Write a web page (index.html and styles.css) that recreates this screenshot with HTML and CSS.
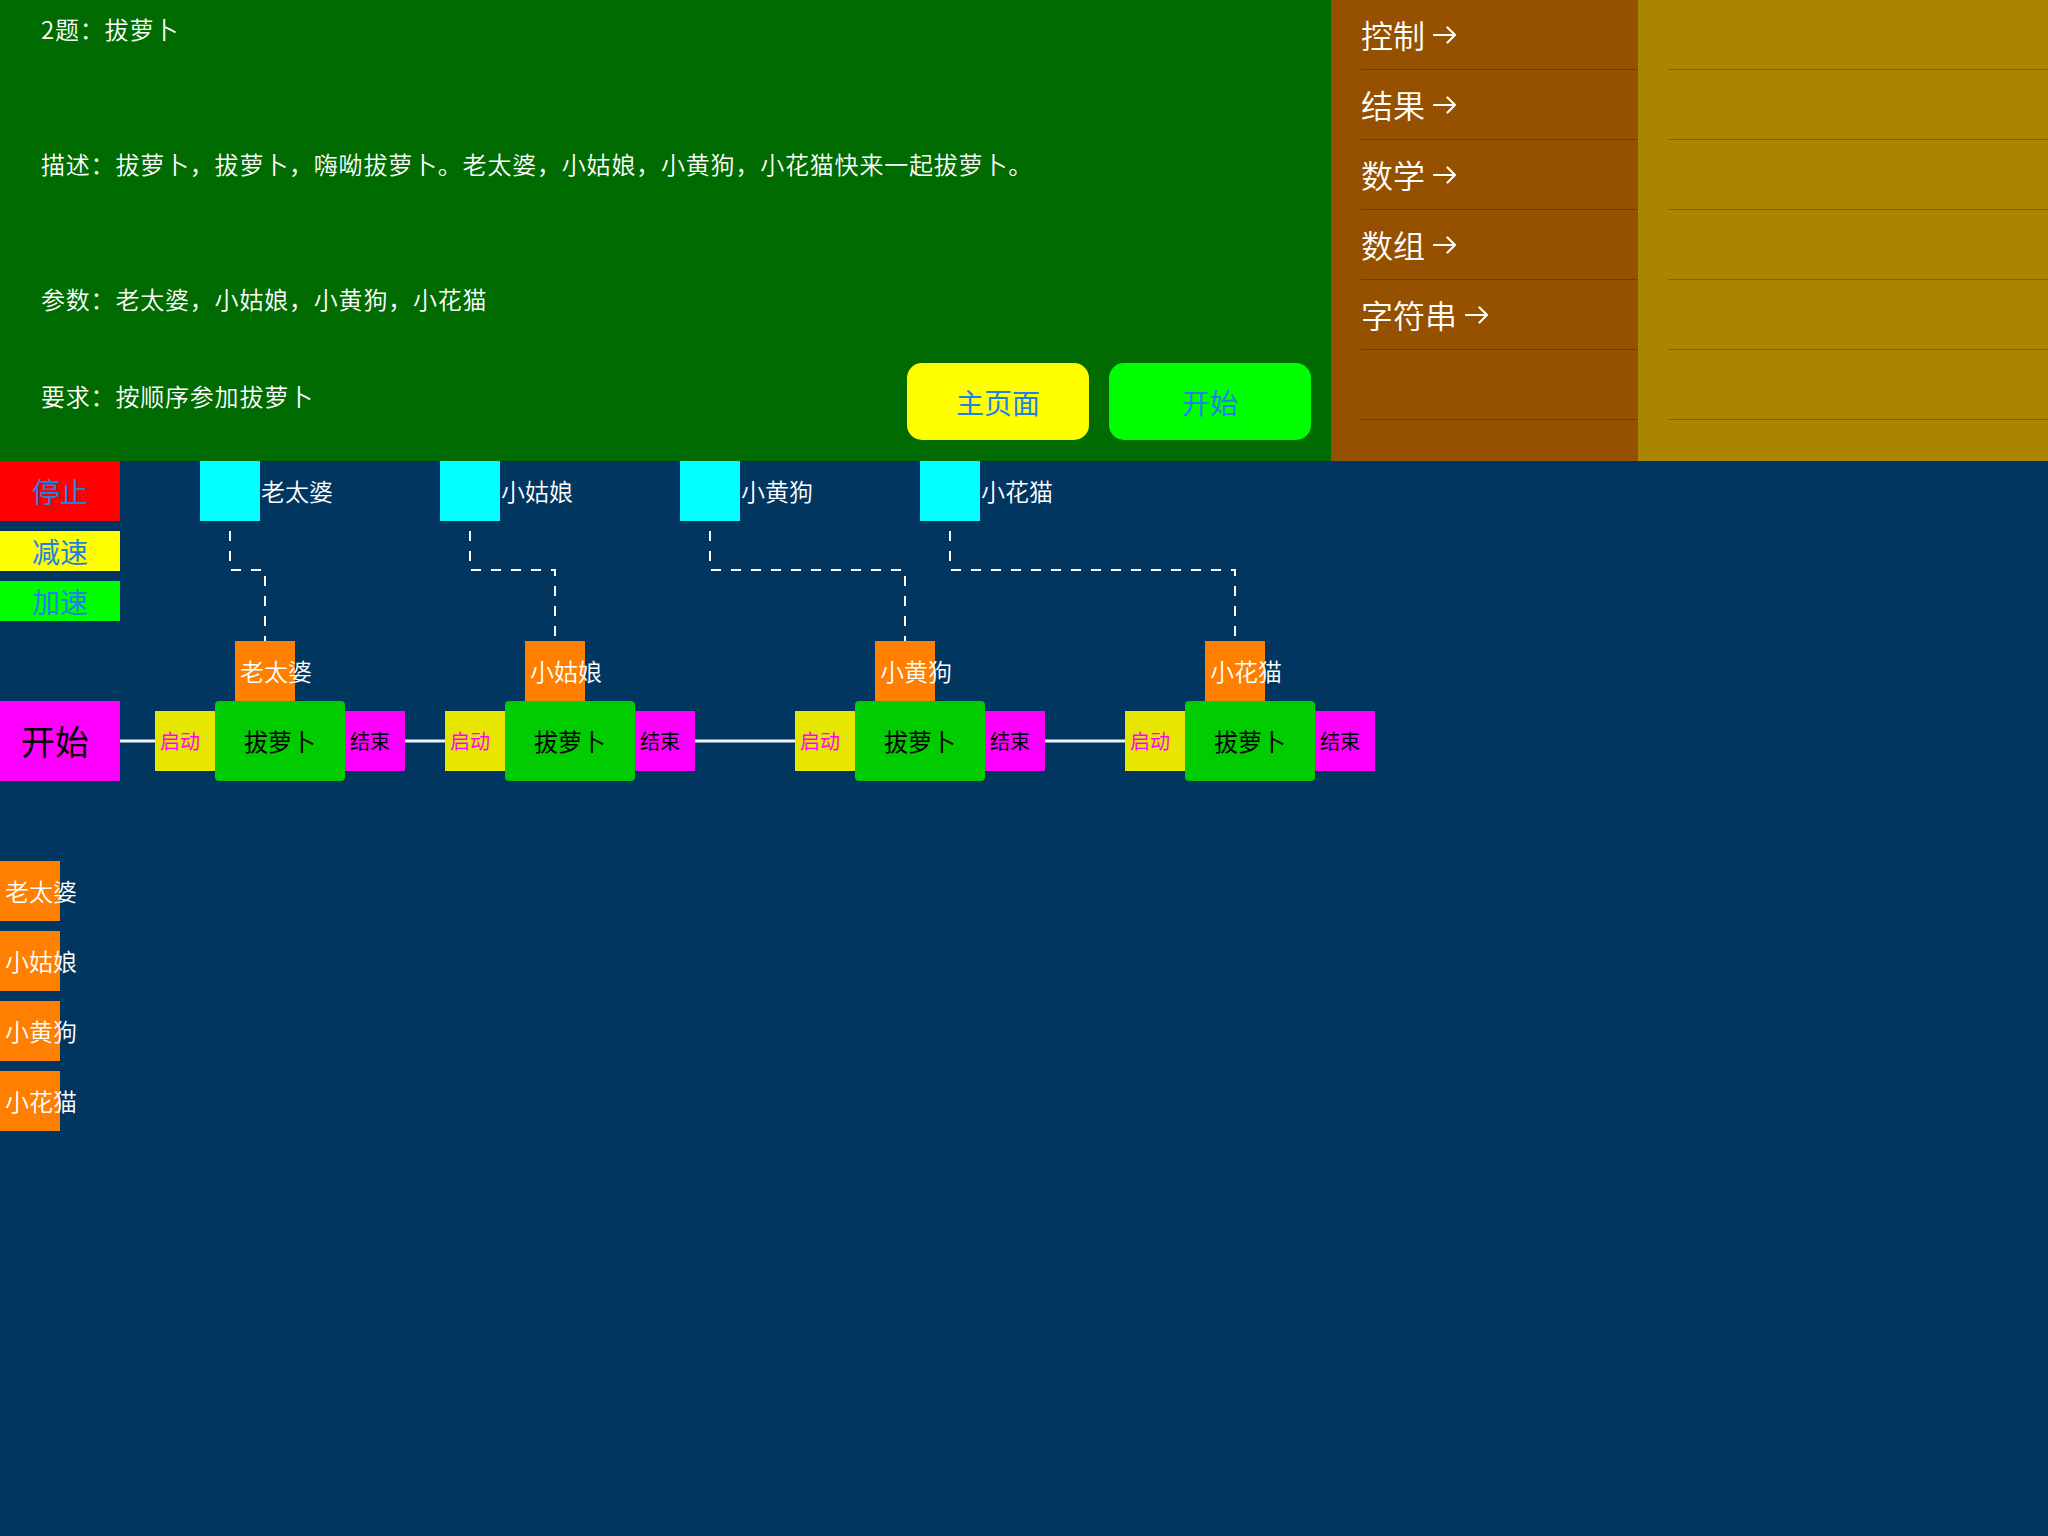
FILE: index.html
```html
<!DOCTYPE html>
<html lang="zh-CN">
<head>
<meta charset="utf-8">
<title>拔萝卜</title>
<link rel="stylesheet" href="styles.css">
</head>
<body>
<div class="page">
  <header class="top">
    <section class="info">
      <div class="line title">2题：拔萝卜</div>
      <div class="line desc">描述：拔萝卜，拔萝卜，嗨呦拔萝卜。老太婆，小姑娘，小黄狗，小花猫快来一起拔萝卜。</div>
      <div class="line params">参数：老太婆，小姑娘，小黄狗，小花猫</div>
      <div class="req-row">
        <div class="req">要求：按顺序参加拔萝卜</div>
        <div class="actions">
          <button class="btn btn-home">主页面</button>
          <button class="btn btn-start">开始</button>
        </div>
      </div>
    </section>
    <nav class="menu">
      <div class="menu-row"><span>控制</span><svg class="arrow" width="24" height="18" viewBox="0 0 24 18"><path d="M1 9 H22 M14.5 1.5 L22 9 L14.5 16.5"/></svg></div>
      <div class="menu-row"><span>结果</span><svg class="arrow" width="24" height="18" viewBox="0 0 24 18"><path d="M1 9 H22 M14.5 1.5 L22 9 L14.5 16.5"/></svg></div>
      <div class="menu-row"><span>数学</span><svg class="arrow" width="24" height="18" viewBox="0 0 24 18"><path d="M1 9 H22 M14.5 1.5 L22 9 L14.5 16.5"/></svg></div>
      <div class="menu-row"><span>数组</span><svg class="arrow" width="24" height="18" viewBox="0 0 24 18"><path d="M1 9 H22 M14.5 1.5 L22 9 L14.5 16.5"/></svg></div>
      <div class="menu-row"><span>字符串</span><svg class="arrow" width="24" height="18" viewBox="0 0 24 18"><path d="M1 9 H22 M14.5 1.5 L22 9 L14.5 16.5"/></svg></div>
      <div class="menu-row"></div>
    </nav>
    <aside class="extra">
      <div class="extra-row"></div>
      <div class="extra-row"></div>
      <div class="extra-row"></div>
      <div class="extra-row"></div>
      <div class="extra-row"></div>
      <div class="extra-row"></div>
    </aside>
  </header>

  <main class="stage">
    <div class="controls">
      <div class="ctl ctl-stop">停止</div>
      <div class="ctl ctl-slow">减速</div>
      <div class="ctl ctl-fast">加速</div>
      <div class="start-node">开始</div>
      <ul class="roster">
        <li class="roster-item">老太婆</li>
        <li class="roster-item">小姑娘</li>
        <li class="roster-item">小黄狗</li>
        <li class="roster-item">小花猫</li>
      </ul>
    </div>

    <div class="diagram">
      <svg class="wires" width="2048" height="1075" viewBox="0 0 2048 1075">
        <path class="flow" d="M120 280 H1140"/>
        <path class="link" d="M230 30 V109 H265 V180"/>
        <path class="link" d="M470 30 V109 H555 V180"/>
        <path class="link" d="M710 30 V109 H905 V180"/>
        <path class="link" d="M950 30 V109 H1235 V180"/>
      </svg>

      <div class="participants">
        <div class="who"><div class="who-box"></div><span class="who-name">老太婆</span></div>
        <div class="who"><div class="who-box"></div><span class="who-name">小姑娘</span></div>
        <div class="who"><div class="who-box"></div><span class="who-name">小黄狗</span></div>
        <div class="who"><div class="who-box"></div><span class="who-name">小花猫</span></div>
      </div>

      <div class="segment seg-a">
        <div class="seg-actor">老太婆</div>
        <div class="seg-row">
          <div class="seg-in">启动</div>
          <div class="seg-body">拔萝卜</div>
          <div class="seg-out">结束</div>
        </div>
      </div>
      <div class="segment seg-b">
        <div class="seg-actor">小姑娘</div>
        <div class="seg-row">
          <div class="seg-in">启动</div>
          <div class="seg-body">拔萝卜</div>
          <div class="seg-out">结束</div>
        </div>
      </div>
      <div class="segment seg-c">
        <div class="seg-actor">小黄狗</div>
        <div class="seg-row">
          <div class="seg-in">启动</div>
          <div class="seg-body">拔萝卜</div>
          <div class="seg-out">结束</div>
        </div>
      </div>
      <div class="segment seg-d">
        <div class="seg-actor">小花猫</div>
        <div class="seg-row">
          <div class="seg-in">启动</div>
          <div class="seg-body">拔萝卜</div>
          <div class="seg-out">结束</div>
        </div>
      </div>
    </div>
  </main>
</div>
</body>
</html>
```

FILE: styles.css
```css
* { box-sizing: border-box; }

html, body {
  margin: 0;
  padding: 0;
}

body {
  width: 2048px;
  height: 1536px;
  overflow: hidden;
  background: #003660;
  font-family: "Noto Sans CJK SC", "Noto Sans", sans-serif;
  font-weight: 350;
  color: #ffffff;
}

.page {
  display: flex;
  flex-direction: column;
  width: 2048px;
  height: 1536px;
}

/* ---------- header ---------- */
.top {
  display: flex;
  height: 461px;
  flex: none;
}

.info {
  width: 1331px;
  background: #006b00;
  padding-left: 41px;
  display: flex;
  flex-direction: column;
  font-size: 24px;
  letter-spacing: 0.8px;
  color: #ffffff;
}

.line { white-space: nowrap; }
.title  { height: 57px;  line-height: 57px; }
.desc   { height: 214px; line-height: 214px; }
.params { height: 56px;  line-height: 56px; }

.req-row {
  flex: 1;
  display: flex;
  justify-content: space-between;
  align-items: flex-end;
  padding-right: 20px;
  padding-bottom: 21px;
}

.req {
  line-height: 30px;
  margin-bottom: 29px;
}

.actions {
  display: flex;
  gap: 20px;
}

.btn {
  height: 77px;
  border: none;
  border-radius: 15px;
  font-family: "Noto Sans CJK SC", "Noto Sans", sans-serif;
  font-weight: 400;
  font-size: 28px;
  letter-spacing: 0;
  color: #1e82e6;
  padding: 0;
}
.btn-home  { width: 182px; background: #ffff00; }
.btn-start { width: 202px; background: #00ff00; }

.menu {
  width: 307px;
  background: #955000;
  padding-left: 30px;
}

.menu-row {
  height: 70px;
  border-bottom: 1px solid rgba(40, 25, 0, 0.35);
  font-size: 32px;
  color: #ffffff;
  white-space: nowrap;
  display: flex;
  align-items: center;
  padding-bottom: 1px;
}

.arrow {
  margin-left: 8px;
  margin-top: 1px;
  flex: none;
}
.arrow path {
  fill: none;
  stroke: #ffffff;
  stroke-width: 2.2;
  stroke-linecap: round;
  stroke-linejoin: round;
}

.extra {
  flex: 1;
  background: #aa8500;
  padding-left: 30px;
}

.extra-row {
  height: 70px;
  border-bottom: 1px solid rgba(40, 25, 0, 0.3);
}

/* ---------- stage ---------- */
.stage {
  position: relative;
  flex: 1;
  background: #003660;
}

.controls {
  display: flex;
  flex-direction: column;
  width: 120px;
}

.ctl {
  width: 120px;
  text-align: center;
  font-size: 28px;
  font-weight: 400;
  color: #1e82e6;
}
.ctl-stop { height: 60px; line-height: 60px; background: #ff0000; }
.ctl-slow { height: 40px; line-height: 40px; background: #ffff00; margin-top: 10px; }
.ctl-fast { height: 40px; line-height: 40px; background: #00ff00; margin-top: 10px; }

.start-node {
  margin-top: 80px;
  width: 120px;
  height: 80px;
  line-height: 80px;
  background: #ff00ff;
  color: #000000;
  font-size: 34px;
  font-weight: 400;
  padding-left: 21px;
  white-space: nowrap;
}

.roster {
  list-style: none;
  margin: 80px 0 0 0;
  padding: 0;
  display: flex;
  flex-direction: column;
  gap: 10px;
}

.roster-item {
  width: 60px;
  height: 60px;
  line-height: 60px;
  background: #ff8000;
  color: #ffffff;
  font-size: 24px;
  padding-left: 5px;
  white-space: nowrap;
}

/* ---------- diagram ---------- */
.diagram {
  position: absolute;
  left: 0;
  top: 0;
  width: 2048px;
  height: 1075px;
}

.wires {
  position: absolute;
  left: 0;
  top: 0;
}

.flow {
  fill: none;
  stroke: #f2f4f6;
  stroke-width: 3;
}

.link {
  fill: none;
  stroke: #ffffff;
  stroke-width: 2;
  stroke-dasharray: 10 10;
}

.participants {
  position: absolute;
  left: 200px;
  top: 0;
  display: flex;
}

.who {
  width: 240px;
  display: flex;
  align-items: center;
}

.who-box {
  width: 60px;
  height: 60px;
  background: #00ffff;
  flex: none;
}

.who-name {
  font-size: 24px;
  line-height: 60px;
  color: #ffffff;
  margin-left: 1px;
  white-space: nowrap;
}

.segment {
  position: absolute;
  top: 180px;
  display: flex;
  flex-direction: column;
}
.seg-a { left: 155px; }
.seg-b { left: 445px; }
.seg-c { left: 795px; }
.seg-d { left: 1125px; }

.seg-actor {
  margin-left: 80px;
  width: 60px;
  height: 60px;
  line-height: 60px;
  background: #ff8000;
  color: #ffffff;
  font-size: 24px;
  padding-left: 5px;
  white-space: nowrap;
}

.seg-row {
  display: flex;
  align-items: center;
  height: 80px;
}

.seg-in,
.seg-out {
  width: 60px;
  height: 60px;
  line-height: 60px;
  font-size: 20px;
  font-weight: 400;
  padding-left: 5px;
  white-space: nowrap;
}
.seg-in  { background: #e6e600; color: #ff00ff; }
.seg-out { background: #ff00ff; color: #000000; }

.seg-body {
  width: 130px;
  height: 80px;
  line-height: 80px;
  background: #00cc00;
  border-radius: 4px;
  text-align: center;
  font-size: 24px;
  font-weight: 400;
  color: #000000;
}
```
